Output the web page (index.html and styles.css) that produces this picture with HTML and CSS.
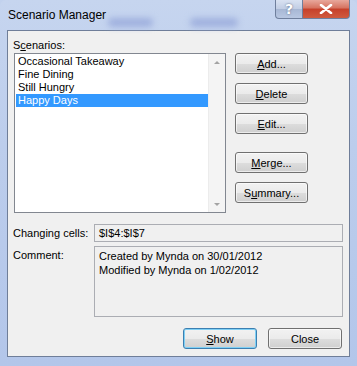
FILE: index.html
```html
<!DOCTYPE html>
<html lang="en">
<head>
  <meta charset="UTF-8">
  <title>Scenario Manager</title>
  <link rel="stylesheet" href="styles.css">
</head>
<body>
  <div class="window">
    <!-- Barre de titre -->
    <div class="titlebar">
      <span class="title">Scenario Manager</span>
      <span class="blur blur-a"></span>
      <span class="blur blur-b"></span>
      <div class="caption">
        <span class="cap-help">?</span>
        <span class="cap-close">
          <svg width="14" height="10" viewBox="0 0 14 10">
            <path d="M2 1 L12 9 M12 1 L2 9" stroke="#fff" stroke-width="2.6" stroke-linecap="round"/>
          </svg>
        </span>
      </div>
    </div>

    <div class="client">
      <div class="label">S<u>c</u>enarios:</div>
      <div class="top-row">
        <div class="listbox">
          <ul class="items">
            <li>Occasional Takeaway</li>
            <li>Fine Dining</li>
            <li>Still Hungry</li>
            <li class="selected">Happy Days</li>
          </ul>
          <div class="scrollbar">
            <span class="arrow up"></span>
            <span class="arrow down"></span>
          </div>
        </div>
        <div class="side-buttons">
          <button><u>A</u>dd...</button>
          <button><u>D</u>elete</button>
          <button><u>E</u>dit...</button>
          <button class="spaced"><u>M</u>erge...</button>
          <button>S<u>u</u>mmary...</button>
        </div>
      </div>

      <div class="field-row">
        <span class="field-label">Changing cells:</span>
        <div class="field">$I$4:$I$7</div>
      </div>
      <div class="field-row comment-row">
        <span class="field-label">Comment:</span>
        <div class="field comment">Created by Mynda on 30/01/2012<br>Modified by Mynda on 1/02/2012</div>
      </div>

      <div class="footer">
        <button class="default"><u>S</u>how</button>
        <button>Close</button>
      </div>
    </div>
  </div>
</body>
</html>
```

FILE: styles.css
```css
/* Style général */
body {
  margin: 0;
  font-family: "Liberation Sans", Arial, sans-serif;
  font-size: 11px;
  color: #000;
  background: #c2d2ee;
}

.window {
  width: 357px;
  height: 366px;
  box-sizing: border-box;
  background: linear-gradient(180deg, #c6d5ef 0%, #bccdec 40%, #b3c6ea 100%);
  border-radius: 6px 6px 0 0;
  overflow: hidden;
}

/* Barre de titre */
.titlebar {
  position: relative;
  height: 30px;
  display: flex;
  align-items: center;
}

.title {
  font-size: 12px;
  margin-left: 8px;
  margin-top: -1px;
}

.blur {
  position: absolute;
  top: 18px;
  height: 9px;
  border-radius: 5px;
  background: #9fb0de;
  filter: blur(3px);
}

.blur-a { left: 108px; width: 45px; }
.blur-b { left: 190px; width: 48px; }

.caption {
  position: absolute;
  top: 0;
  right: 7px;
  display: flex;
}

.cap-help, .cap-close {
  height: 18px;
  display: flex;
  align-items: center;
  justify-content: center;
  border: 1px solid #6f7f9d;
  border-top: none;
}

.cap-help {
  width: 26px;
  border-radius: 0 0 0 4px;
  background: linear-gradient(180deg, #d9e2f2 0%, #c1cde4 50%, #a7b7d4 51%, #b8c7e2 100%);
  color: #fff;
  font: bold 14px "DejaVu Sans", sans-serif;
  text-shadow: 0 0 2px #4a5a78;
}

.cap-close {
  width: 46px;
  border-left: none;
  border-radius: 0 0 4px 0;
  background: linear-gradient(180deg, #e8a89c 0%, #d6725f 45%, #c6402a 50%, #d05a3e 100%);
}

/* Zone cliente */
.client {
  margin: 0 7px;
  height: 327px;
  box-sizing: border-box;
  border: 1px solid #6f7e99;
  background: #f0f0f0;
  padding: 8px 6px 0 6px;
}

.label {
  height: 13px;
  line-height: 13px;
  margin-left: -1px;
  margin-bottom: 1px;
}

.top-row {
  display: flex;
  gap: 9px;
}

/* Liste des scénarios */
.listbox {
  width: 212px;
  height: 160px;
  box-sizing: border-box;
  border: 1px solid #828790;
  background: #fff;
  display: flex;
  padding: 1px 0 1px 1px;
}

.items {
  list-style: none;
  margin: 0;
  padding: 0;
  flex: 1;
}

.items li {
  height: 13px;
  line-height: 13px;
  padding-left: 2px;
}

.items li.selected {
  background: #3399ff;
  color: #fff;
}

.scrollbar {
  width: 17px;
  margin: -1px 0 -1px 0;
  background: #f4f4f4;
  border-left: 1px solid #ececec;
  display: flex;
  flex-direction: column;
  justify-content: space-between;
  align-items: center;
  padding: 7px 0 6px;
  box-sizing: border-box;
}

.arrow {
  width: 0;
  height: 0;
  border-left: 3px solid transparent;
  border-right: 3px solid transparent;
}

.arrow.up { border-bottom: 3px solid #a3a3a3; }
.arrow.down { border-top: 3px solid #a3a3a3; }

/* Boutons */
button {
  width: 73px;
  height: 21px;
  padding: 0;
  font: 11px "Liberation Sans", Arial, sans-serif;
  color: #000;
  border: 1px solid #707070;
  border-radius: 3px;
  background: linear-gradient(180deg, #f2f2f2 0%, #ebebeb 50%, #dddddd 51%, #cfcfcf 100%);
  box-shadow: inset 0 0 0 1px rgba(255, 255, 255, 0.6);
}

.side-buttons {
  display: flex;
  flex-direction: column;
  gap: 9px;
}

.side-buttons .spaced {
  margin-top: 9px;
}

/* Champs */
.field-row {
  display: flex;
  margin-top: 11px;
  height: 18px;
}

.comment-row {
  margin-top: 4px;
  height: 71px;
}

.field-label {
  width: 81px;
  margin-left: -1px;
  line-height: 18px;
}

.field {
  flex: 1;
  border: 1px solid #abadb3;
  background: #f0f0f0;
  padding: 0 4px;
  line-height: 16px;
}

.comment {
  padding-top: 2px;
  line-height: 14px;
}

.footer {
  display: flex;
  justify-content: flex-end;
  gap: 11px;
  margin-top: 11px;
  padding-right: 1px;
}

.footer button {
  width: 74px;
}

.footer .default {
  border-color: #3c7fb1;
  box-shadow: inset 0 0 0 1px #7fd0f5;
}
```
